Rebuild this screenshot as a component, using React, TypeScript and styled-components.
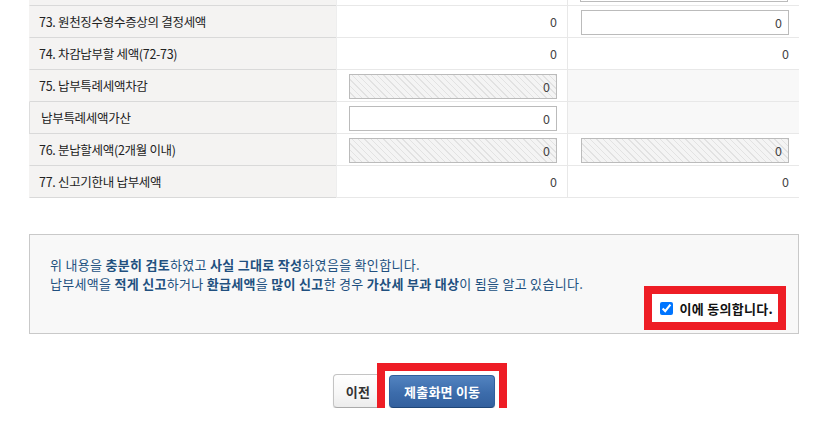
import React from 'react';
import styled, { createGlobalStyle } from 'styled-components';

const GlobalStyle = createGlobalStyle`
  html, body {
    margin: 0;
    padding: 0;
    background: #ffffff;
  }
  body {
    font-family: "Noto Sans CJK KR", "Noto Sans", sans-serif;
    color: #333333;
  }
`;

const Page = styled.div`
  width: 770px;
  margin-left: 29px;
`;

const Sheet = styled.div`
  display: flex;
  flex-direction: column;
`;

const Row = styled.div<{ $h?: number }>`
  display: grid;
  grid-template-columns: 307px 231px 232px;
  height: ${props => props.$h ?? 32}px;
`;

const Label = styled.div<{ $sub?: boolean }>`
  display: flex;
  align-items: center;
  padding-left: ${props => (props.$sub ? '11px' : '9px')};
  background: #f4f3f2;
  border-bottom: 1px solid #d9d9d9;
  border-left: ${props => (props.$sub ? '1px solid #dddddd' : '1px solid transparent')};
  font-size: 12.5px;
  letter-spacing: -0.3px;
  color: #222222;
  box-sizing: border-box;
  white-space: nowrap;
`;

const Cell = styled.div<{ $empty?: boolean; $first?: boolean }>`
  display: flex;
  align-items: center;
  justify-content: flex-end;
  padding: 0 10px 0 12px;
  background: ${props => (props.$empty ? '#f8f8f8' : '#ffffff')};
  border-bottom: 1px solid #e8e8e8;
  border-left: 1px solid ${props => (props.$first ? '#eeeeee' : '#e8e8e8')};
  font-size: 12.5px;
  color: #444444;
  box-sizing: border-box;
`;

const TopCell = styled(Cell)`
  align-items: flex-start;
  justify-content: flex-start;
`;

const InputTail = styled.div`
  width: 208px;
  height: 2px;
  border: 1px solid #bbbbbb;
  border-top: none;
  box-sizing: border-box;
`;

const Amount = styled.input<{ $locked?: boolean }>`
  width: 208px;
  height: 25px;
  margin-top: 1px;
  box-sizing: border-box;
  border: 1px solid #bbbbbb;
  padding: 0 6px 0 0;
  text-align: right;
  font-family: "Noto Sans CJK KR", "Noto Sans", sans-serif;
  font-size: 12.5px;
  color: #444444;
  outline: none;
  background: ${props =>
    props.$locked
      ? 'repeating-linear-gradient(45deg, #f4f4f4 0px, #f4f4f4 3.5px, #e2e2e2 3.5px, #e2e2e2 4.5px)'
      : '#ffffff'};
`;

const Notice = styled.div`
  margin-top: 36px;
  height: 100px;
  box-sizing: border-box;
  border: 1px solid #c9c9c9;
  background: #f8f8f8;
  padding: 20px 20px 0 20px;
  display: flex;
  flex-direction: column;
`;

const NoticeText = styled.p`
  margin: 0;
  font-size: 13px;
  line-height: 19px;
  color: #21507f;
  letter-spacing: 0.3px;

  b {
    font-weight: 700;
  }
`;

const Agree = styled.label`
  align-self: flex-end;
  display: flex;
  align-items: center;
  gap: 6px;
  height: 28px;
  margin-top: 1px;
  padding: 0 5px 0 8px;
  background: #ffffff;
  outline: 8px solid #ee1d25;
  font-size: 13px;
  font-weight: 700;
  color: #111111;
  letter-spacing: 0.3px;
`;

const AgreeBox = styled.input`
  width: 13px;
  height: 13px;
  margin: 0;
`;

const Actions = styled.div`
  display: flex;
  justify-content: center;
  align-items: center;
  gap: 6px;
  margin-top: 40px;
`;

const Highlight = styled.span`
  display: flex;
  outline: 8px solid #ee1d25;
  outline-offset: 4px;
`;

const Button = styled.button<{ $primary?: boolean }>`
  height: ${props => (props.$primary ? '33px' : '34px')};
  padding: 0 ${props => (props.$primary ? '14px' : '12px')};
  border-radius: 4px;
  font-family: "Noto Sans CJK KR", "Noto Sans", sans-serif;
  font-size: 13px;
  font-weight: 700;
  letter-spacing: 0.2px;
  cursor: pointer;
  color: ${props => (props.$primary ? '#ffffff' : '#333333')};
  border: 1px solid ${props => (props.$primary ? '#30609c' : '#c4c4c4')};
  border-bottom-color: ${props => (props.$primary ? '#1f4678' : '#aaaaaa')};
  background: ${props =>
    props.$primary
      ? 'linear-gradient(#5283c0, #3c6cab 55%, #33609e)'
      : 'linear-gradient(#ffffff, #f6f6f6 60%, #ececec)'};
  box-shadow: 0 1px 1px rgba(0, 0, 0, 0.15);
`;

type Value = { kind: 'text' | 'input' | 'locked' | 'empty' };

const rows: { label: string; sub?: boolean; a: Value; b: Value }[] = [
  { label: '73. 원천징수영수증상의 결정세액', a: { kind: 'text' }, b: { kind: 'input' } },
  { label: '74. 차감납부할 세액(72-73)', a: { kind: 'text' }, b: { kind: 'text' } },
  { label: '75. 납부특례세액차감', a: { kind: 'locked' }, b: { kind: 'empty' } },
  { label: '납부특례세액가산', sub: true, a: { kind: 'input' }, b: { kind: 'empty' } },
  { label: '76. 분납할세액(2개월 이내)', a: { kind: 'locked' }, b: { kind: 'locked' } },
  { label: '77. 신고기한내 납부세액', a: { kind: 'text' }, b: { kind: 'text' } },
];

const ValueCell: React.FC<{ v: Value; first?: boolean }> = ({ v, first }) => {
  if (v.kind === 'empty') return <Cell $empty $first={first} />;
  if (v.kind === 'text') return <Cell $first={first}>0</Cell>;
  return (
    <Cell $first={first}>
      <Amount $locked={v.kind === 'locked'} defaultValue="0" readOnly={v.kind === 'locked'} />
    </Cell>
  );
};

const App: React.FC = () => {
  return (
    <Page>
      <GlobalStyle />
      <Sheet>
        <Row $h={6}>
          <Label />
          <Cell $first />
          <TopCell>
            <InputTail />
          </TopCell>
        </Row>
        {rows.map(r => (
          <Row key={r.label}>
            <Label $sub={r.sub}>{r.label}</Label>
            <ValueCell v={r.a} first />
            <ValueCell v={r.b} />
          </Row>
        ))}
      </Sheet>

      <Notice>
        <NoticeText>
          위 내용을 <b>충분히 검토</b>하였고 <b>사실 그대로 작성</b>하였음을 확인합니다.
          <br />
          납부세액을 <b>적게 신고</b>하거나 <b>환급세액</b>을 <b>많이 신고</b>한 경우{' '}
          <b>가산세 부과 대상</b>이 됨을 알고 있습니다.
        </NoticeText>
        <Agree>
          <AgreeBox type="checkbox" defaultChecked />
          이에 동의합니다.
        </Agree>
      </Notice>

      <Actions>
        <Button>이전</Button>
        <Highlight>
          <Button $primary>제출화면 이동</Button>
        </Highlight>
      </Actions>
    </Page>
  );
};

export default App;
